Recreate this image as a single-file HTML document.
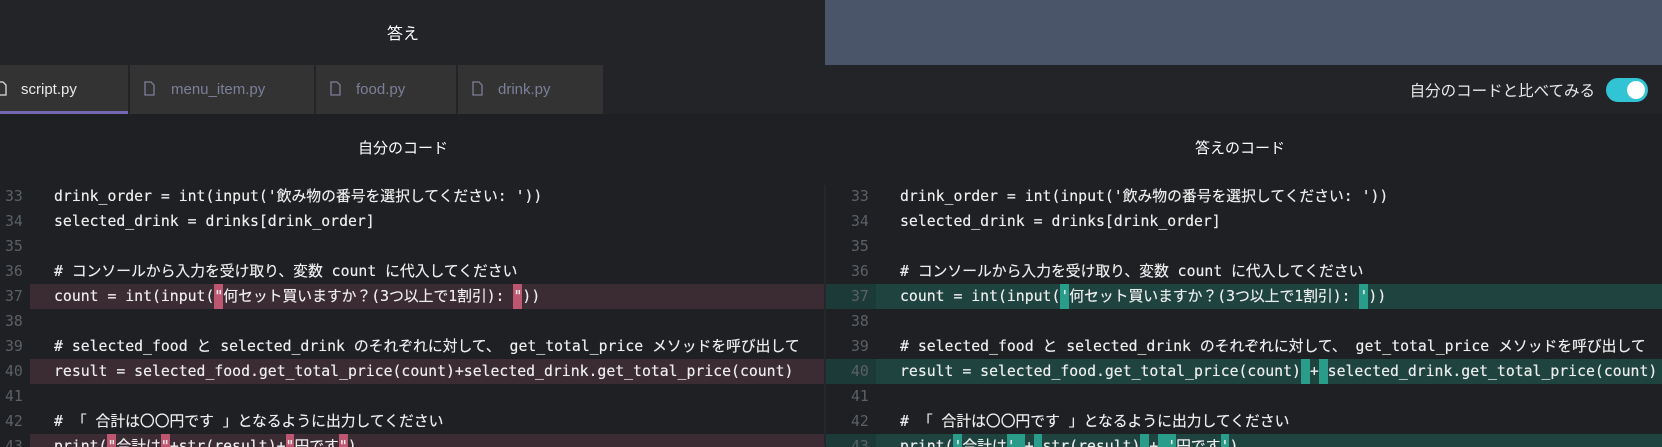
<!DOCTYPE html>
<html><head><meta charset="utf-8"><style>
*{margin:0;padding:0;box-sizing:border-box}
body{width:1662px;height:446px;overflow:hidden;background:#1e2023;font-family:"Liberation Sans","Noto Sans CJK JP",sans-serif;color:#eee;position:relative}
.hdl{position:absolute;left:0;top:0;width:825px;height:65px;background:#232428}
.hdr{position:absolute;left:825px;top:0;width:837px;height:65px;background:#4b5569}
.ans{position:absolute;left:0;width:806px;top:20px;text-align:center;font-size:16px;color:#fff}
.tabs{position:absolute;left:0;top:65px;width:1662px;height:49px;background:#232428}
.tab{position:absolute;top:0;height:49px;background:#333333;color:#7c7f99;font-size:15px;line-height:49px}
.tab svg{position:absolute;top:16px}
.tab.act{color:#e8e8e8;border-bottom:3px solid #7565b5}
.tog{position:absolute;right:67px;top:79px;font-size:15.5px;color:#e8e8e8}
.sw{position:absolute;left:1606px;top:78px;width:42px;height:24px;border-radius:12px;background:#31c4d4}
.sw i{position:absolute;right:3px;top:3px;width:18px;height:18px;border-radius:50%;background:#fff}
.t{position:absolute;top:137px;font-size:15px;color:#fff;text-align:center;width:400px}
.pane{position:absolute;top:1px;height:446px;overflow:hidden}
.ln{position:absolute;left:0;height:25px;width:100%;font-family:"DejaVu Sans Mono","Noto Sans CJK JP",monospace;font-size:14.8px;line-height:25px;white-space:pre;color:#ececec;text-shadow:0 0 0.4px #fff}
.n{position:absolute;color:#5c6166;text-shadow:none}
.c{position:absolute}
.hl .hb{position:absolute;top:0;height:25px}
.m{display:inline-block;height:25px;vertical-align:top}
.L .m{background:#bd5670}
.R .m{background:#2a9d8a}
.divr{position:absolute;left:824px;top:185px;width:2px;height:261px;background:#25272b}
</style></head><body>
<div class="hdl"></div><div class="hdr"></div>
<div class="ans">答え</div>
<div class="tabs">
 <div class="tab act" style="left:0;width:128px"><svg style="left:-4px" width="11" height="15" viewBox="0 0 11 15"><path d="M1 1h6l3 3v10H1z" fill="none" stroke="#ddd" stroke-width="1.3"/></svg><span style="position:absolute;left:21px">script.py</span></div>
 <div class="tab" style="left:130px;width:184px"><svg style="left:14px" width="11" height="15" viewBox="0 0 11 15"><path d="M1 1h6l3 3v10H1z" fill="none" stroke="#7c7f99" stroke-width="1.3"/></svg><span style="position:absolute;left:41px">menu_item.py</span></div>
 <div class="tab" style="left:316px;width:140px"><svg style="left:14px" width="11" height="15" viewBox="0 0 11 15"><path d="M1 1h6l3 3v10H1z" fill="none" stroke="#7c7f99" stroke-width="1.3"/></svg><span style="position:absolute;left:40px">food.py</span></div>
 <div class="tab" style="left:458px;width:145px"><svg style="left:14px" width="11" height="15" viewBox="0 0 11 15"><path d="M1 1h6l3 3v10H1z" fill="none" stroke="#7c7f99" stroke-width="1.3"/></svg><span style="position:absolute;left:40px">drink.py</span></div>
</div>
<div class="tog">自分のコードと比べてみる</div>
<div class="sw"><i></i></div>
<div class="t" style="left:203px">自分のコード</div>
<div class="t" style="left:1040px">答えのコード</div>

<div class="pane L" style="left:0;width:825px">
 <div class="ln" style="top:183px"><span class="n" style="left:5px">33</span><span class="c" style="left:54px">drink_order = int(input('飲み物の番号を選択してください: '))</span></div>
 <div class="ln" style="top:208px"><span class="n" style="left:5px">34</span><span class="c" style="left:54px">selected_drink = drinks[drink_order]</span></div>
 <div class="ln" style="top:233px"><span class="n" style="left:5px">35</span></div>
 <div class="ln" style="top:258px"><span class="n" style="left:5px">36</span><span class="c" style="left:54px"># コンソールから入力を受け取り、変数 count に代入してください</span></div>
 <div class="ln hl" style="top:283px"><span class="hb" style="left:30px;width:795px;background:#3b2b33"></span><span class="n" style="left:5px">37</span><span class="c" style="left:54px">count = int(input(<span class="m">"</span>何セット買いますか？(3つ以上で1割引): <span class="m">"</span>))</span></div>
 <div class="ln" style="top:308px"><span class="n" style="left:5px">38</span></div>
 <div class="ln" style="top:333px"><span class="n" style="left:5px">39</span><span class="c" style="left:54px"># selected_food と selected_drink のそれぞれに対して、 get_total_price メソッドを呼び出して</span></div>
 <div class="ln hl" style="top:358px"><span class="hb" style="left:30px;width:795px;background:#3b2b33"></span><span class="n" style="left:5px">40</span><span class="c" style="left:54px">result = selected_food.get_total_price(count)+selected_drink.get_total_price(count)</span></div>
 <div class="ln" style="top:383px"><span class="n" style="left:5px">41</span></div>
 <div class="ln" style="top:408px"><span class="n" style="left:5px">42</span><span class="c" style="left:54px"># 「 合計は〇〇円です 」となるように出力してください</span></div>
 <div class="ln hl" style="top:433px"><span class="hb" style="left:30px;width:795px;background:#3b2b33"></span><span class="n" style="left:5px">43</span><span class="c" style="left:54px">print(<span class="m">"</span>合計は<span class="m">"</span>+str(result)+<span class="m">"</span>円です<span class="m">"</span>)</span></div>
</div>
<div class="divr"></div>
<div class="pane R" style="left:826px;width:836px">
 <div class="ln" style="top:183px"><span class="n" style="left:25px">33</span><span class="c" style="left:74px">drink_order = int(input('飲み物の番号を選択してください: '))</span></div>
 <div class="ln" style="top:208px"><span class="n" style="left:25px">34</span><span class="c" style="left:74px">selected_drink = drinks[drink_order]</span></div>
 <div class="ln" style="top:233px"><span class="n" style="left:25px">35</span></div>
 <div class="ln" style="top:258px"><span class="n" style="left:25px">36</span><span class="c" style="left:74px"># コンソールから入力を受け取り、変数 count に代入してください</span></div>
 <div class="ln hl" style="top:283px"><span class="hb" style="left:0;width:50px;background:#1c3a37"></span><span class="hb" style="left:50px;width:786px;background:#1f4440"></span><span class="n" style="left:25px">37</span><span class="c" style="left:74px">count = int(input(<span class="m">'</span>何セット買いますか？(3つ以上で1割引): <span class="m">'</span>))</span></div>
 <div class="ln" style="top:308px"><span class="n" style="left:25px">38</span></div>
 <div class="ln" style="top:333px"><span class="n" style="left:25px">39</span><span class="c" style="left:74px"># selected_food と selected_drink のそれぞれに対して、 get_total_price メソッドを呼び出して</span></div>
 <div class="ln hl" style="top:358px"><span class="hb" style="left:0;width:50px;background:#1c3a37"></span><span class="hb" style="left:50px;width:786px;background:#1f4440"></span><span class="n" style="left:25px">40</span><span class="c" style="left:74px">result = selected_food.get_total_price(count)<span class="m"> </span>+<span class="m"> </span>selected_drink.get_total_price(count)</span></div>
 <div class="ln" style="top:383px"><span class="n" style="left:25px">41</span></div>
 <div class="ln" style="top:408px"><span class="n" style="left:25px">42</span><span class="c" style="left:74px"># 「 合計は〇〇円です 」となるように出力してください</span></div>
 <div class="ln hl" style="top:433px"><span class="hb" style="left:0;width:50px;background:#1c3a37"></span><span class="hb" style="left:50px;width:786px;background:#1f4440"></span><span class="n" style="left:25px">43</span><span class="c" style="left:74px">print(<span class="m">'</span>合計は<span class="m">' </span>+<span class="m"> </span>str(result)<span class="m"> </span>+<span class="m"> '</span>円です<span class="m">'</span>)</span></div>
</div>
</body></html>
